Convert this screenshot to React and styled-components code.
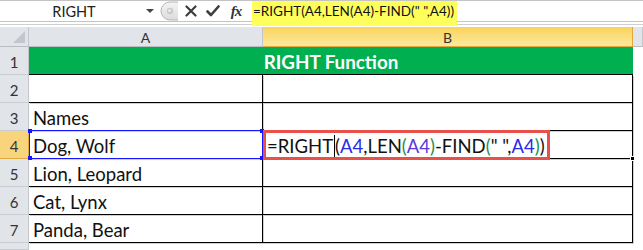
import React from 'react';
import styled, { createGlobalStyle } from 'styled-components';

const Global = createGlobalStyle`
  html, body { margin: 0; padding: 0; background: #fff; }
  body { width: 643px; height: 250px; overflow: hidden; font-family: Lato, "Open Sans", sans-serif; }
  * { box-sizing: border-box; }
`;

const Page = styled.div`
  width: 643px;
  height: 250px;
  display: flex;
  flex-direction: column;
  background: #fff;
  overflow: hidden;
`;

const FormulaBar = styled.div`
  display: flex;
  align-items: flex-start;
  height: 27px;
  border-top: 1px solid #c4c4c4;
  background: #fff;
`;

const NameBox = styled.div`
  width: 160px;
  height: 21px;
  border-bottom: 1px solid #c4c4c4;
  display: flex;
  align-items: center;
  font-size: 14.5px;
  color: #222;
  margin-bottom: 1px;
  box-shadow: 0 2px 0 #fff, 0 3px 0 #cfcfcf;
`;

const NameText = styled.span`
  flex: 1;
  text-align: center;
  padding-left: 2px;
`;

const Caret = styled.span`
  width: 0;
  height: 0;
  border-left: 4px solid transparent;
  border-right: 4px solid transparent;
  border-top: 4px solid #444;
  margin-right: 6px;
`;

const Tools = styled.div`
  width: 92px;
  height: 21px;
  display: flex;
  align-items: center;
  border-bottom: 1px solid #c4c4c4;
  box-shadow: 0 2px 0 #fff, 0 3px 0 #cfcfcf;
`;

const ToolSlot = styled.div`
  width: ${p => p.w}px;
  display: flex;
  align-items: center;
  justify-content: ${p => p.align || 'center'};
`;

const Fx = styled.span`
  font-family: "Liberation Serif", serif;
  font-style: italic;
  font-weight: bold;
  font-size: 15px;
  color: #333;
  letter-spacing: -1px;
`;

const FormulaInput = styled.div`
  flex: 1;
  height: 21px;
  border-bottom: 1px solid #c4c4c4;
  display: flex;
  align-items: flex-start;
  box-shadow: 0 2px 0 #fff, 0 3px 0 #cfcfcf;
`;

const Highlight = styled.span`
  background: #ffff5c;
  height: 25px;
  padding: 2px 3px 0 1px;
  font-size: 13.5px;
  color: #111;
  white-space: pre;
`;

const Sheet = styled.div`
  flex: 1;
  display: grid;
  grid-template-columns: 29px 234px 370px 10px;
  grid-template-rows: 20px repeat(7, 28px) 1fr;
`;

const Corner = styled.div`
  background: #e1e4e9;
  border-right: 1px solid #c3c6cb;
  border-bottom: 1px solid #b9bcc1;
  position: relative;
  &::after {
    content: '';
    position: absolute;
    right: 3px;
    bottom: 3px;
    border-left: 12px solid transparent;
    border-bottom: 12px solid #c3c6cc;
  }
`;

const ColHeader = styled.div`
  background: ${p => (p.active ? 'linear-gradient(#f9d35c, #fde99c)' : '#e1e4e9')};
  border-right: 1px solid ${p => (p.active ? '#e2a73e' : '#c3c6cb')};
  border-bottom: 1px solid ${p => (p.active ? '#e2a73e' : '#b9bcc1')};
  display: flex;
  align-items: center;
  justify-content: center;
  font-size: 14px;
  color: #333;
  padding-top: 2px;
`;

const RowHeader = styled.div`
  background: ${p => (p.active ? '#f8d57c' : '#e1e4e9')};
  border-right: 1px solid ${p => (p.active ? '#e2a73e' : '#c3c6cb')};
  border-bottom: 1px solid ${p => (p.active ? '#e2a73e' : '#c9ccd1')};
  display: flex;
  align-items: center;
  justify-content: center;
  font-size: 15px;
  color: #333;
  padding-top: 3px;
`;

const Title = styled.div`
  grid-column: 2 / 4;
  background: #00b050;
  border-bottom: 1px solid #000;
  display: flex;
  align-items: center;
  justify-content: center;
  color: #fff;
  font-weight: bold;
  font-size: 18.8px;
  padding-top: 1px;
`;

const Cell = styled.div`
  position: relative;
  border-right: ${p => (p.grid ? '1px solid #000' : 'none')};
  border-bottom: ${p => (p.grid ? '1px solid #000' : 'none')};
  box-shadow: ${p => (p.grid ? '1px 1px 0 rgba(0,0,0,0.18)' : 'none')};
  display: flex;
  align-items: flex-end;
  padding: 0 0 1px 4px;
  font-size: 18.5px;
  color: #111;
  white-space: nowrap;
`;

const RefBox = styled.div`
  position: absolute;
  left: 0;
  top: -1px;
  right: -1px;
  bottom: -1px;
  border: 1px solid #1515ff;
  pointer-events: none;
  z-index: 2;
`;

const Knob = styled.span`
  position: absolute;
  width: 4px;
  height: 4px;
  background: #1515ff;
  ${p => (p.top ? 'top: -2px;' : 'bottom: -2px;')}
  ${p => (p.left ? 'left: -2px;' : 'right: -2px;')}
`;

const Editor = styled.div`
  position: absolute;
  left: 0;
  top: -1px;
  width: 287px;
  height: 30px;
  border: 3px solid #e8504a;
  display: flex;
  align-items: center;
  padding: 1px 0 0 1px;
  font-size: 18.5px;
  background: #fff;
  z-index: 3;
`;

const Tok = styled.span`
  color: ${p => p.c || '#111'};
  white-space: pre;
`;

const Cursor = styled.span`
  display: inline-block;
  width: 1px;
  height: 22px;
  background: #000;
  margin: 0 0 0 1px;
`;

const FillHandle = styled.span`
  position: absolute;
  right: -3px;
  bottom: -3px;
  width: 5px;
  height: 5px;
  background: #000;
  border: 1px solid #fff;
  z-index: 3;
`;

const rows = [
  { n: 2, a: '' },
  { n: 3, a: 'Names' },
  { n: 4, a: 'Dog, Wolf', active: true },
  { n: 5, a: 'Lion, Leopard' },
  { n: 6, a: 'Cat, Lynx' },
  { n: 7, a: 'Panda, Bear' },
];

const BLUE = '#2a2ae8';
const GREEN = '#1f8f4a';
const PURPLE = '#5b3ad8';

function Splitter() {
  return (
    <svg width="18" height="20" viewBox="0 0 18 20">
      <defs>
        <linearGradient id="sg" x1="0" y1="0" x2="0" y2="1">
          <stop offset="0" stopColor="#f4f4f4" />
          <stop offset="1" stopColor="#dcdcdc" />
        </linearGradient>
      </defs>
      <path d="M18 1 H10 A9 9 0 0 0 10 19 H18" fill="url(#sg)" stroke="#b5b5b5" />
      <circle cx="10" cy="10" r="3.2" fill="#c9c9c9" />
      <circle cx="9.5" cy="9.5" r="1.6" fill="#e9e9e9" />
    </svg>
  );
}

function XIcon() {
  return (
    <svg width="12" height="12" viewBox="0 0 12 12">
      <path d="M1.5 1.5 L10.5 10.5 M10.5 1.5 L1.5 10.5" stroke="#3d3d3d" strokeWidth="2.2" strokeLinecap="round" />
    </svg>
  );
}

function CheckIcon() {
  return (
    <svg width="14" height="12" viewBox="0 0 14 12">
      <path d="M1.5 6.5 L5 10 L12.5 1.5" stroke="#3d3d3d" strokeWidth="2.6" fill="none" strokeLinecap="round" strokeLinejoin="round" />
    </svg>
  );
}

export default function App() {
  return (
    <>
      <Global />
      <Page>
        <FormulaBar>
          <NameBox>
            <NameText>RIGHT</NameText>
            <Caret />
          </NameBox>
          <Tools>
            <ToolSlot w={20} align="flex-start"><Splitter /></ToolSlot>
            <ToolSlot w={22}><XIcon /></ToolSlot>
            <ToolSlot w={22}><CheckIcon /></ToolSlot>
            <ToolSlot w={24}><Fx>fx</Fx></ToolSlot>
          </Tools>
          <FormulaInput>
            <Highlight>=RIGHT(A4,LEN(A4)-FIND(" ",A4))</Highlight>
          </FormulaInput>
        </FormulaBar>
        <Sheet>
          <Corner />
          <ColHeader>A</ColHeader>
          <ColHeader active>B</ColHeader>
          <ColHeader />

          <RowHeader>1</RowHeader>
          <Title>RIGHT Function</Title>
          <Cell />

          {rows.map(r => (
            <React.Fragment key={r.n}>
              <RowHeader active={r.active}>{r.n}</RowHeader>
              <Cell grid>
                {r.a}
                {r.active && (
                  <RefBox>
                    <Knob top left />
                    <Knob top />
                    <Knob left />
                    <Knob />
                  </RefBox>
                )}
              </Cell>
              <Cell grid>
                {r.active && (
                  <>
                    <Editor>
                      <Tok>=RIGHT</Tok>
                      <Cursor />
                      <Tok>(</Tok>
                      <Tok c={BLUE}>A4</Tok>
                      <Tok>,LEN</Tok>
                      <Tok c={GREEN}>(</Tok>
                      <Tok c={PURPLE}>A4</Tok>
                      <Tok c={GREEN}>)</Tok>
                      <Tok>-FIND</Tok>
                      <Tok c={GREEN}>(</Tok>
                      <Tok>" ",</Tok>
                      <Tok c={BLUE}>A4</Tok>
                      <Tok c={GREEN}>)</Tok>
                      <Tok>)</Tok>
                    </Editor>
                    <FillHandle />
                  </>
                )}
              </Cell>
              <Cell />
            </React.Fragment>
          ))}

          <RowHeader />
          <Cell />
          <Cell />
          <Cell />
        </Sheet>
      </Page>
    </>
  );
}
